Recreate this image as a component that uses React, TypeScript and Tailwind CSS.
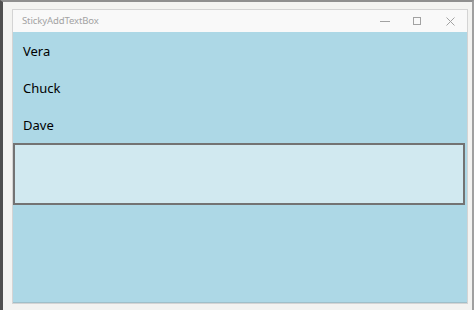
const names = ['Vera', 'Chuck', 'Dave'];

export default function App() {
  return (
    <div className="w-[474px] h-[310px] overflow-hidden bg-[#f3f3f1] border-t-2 border-t-[#8f8f8f] border-l-[3px] border-l-[#4f4f4f] border-r-2 border-r-[#a0a0a0] pl-[9px] pt-[7px] font-['Noto_Sans',sans-serif]">
      <div className="w-[456px] h-[295px] flex flex-col border border-[#d4d4d4] bg-white">
        {/* title bar */}
        <div className="h-[22px] flex items-center bg-[#f9f9f9] pl-[9px]">
          <span className="text-[9.5px] text-[#a3a3a3] tracking-[-0.1px]">StickyAddTextBox</span>
          <div className="ml-auto flex items-center h-full">
            <div className="w-[32px] h-full flex items-center justify-center">
              <div className="w-[10px] h-px bg-[#a2a2a2]" />
            </div>
            <div className="w-[32px] h-full flex items-center justify-center">
              <div className="w-[8px] h-[8px] border border-[#a2a2a2]" />
            </div>
            <div className="w-[34px] h-full flex items-center justify-center">
              <svg width="9" height="9" viewBox="0 0 9 9" fill="none" stroke="#a2a2a2" strokeWidth="1">
                <path d="M0.5 0.5 L8.5 8.5 M8.5 0.5 L0.5 8.5" />
              </svg>
            </div>
          </div>
        </div>
        {/* content */}
        <div className="flex-1 flex flex-col bg-[#add8e6] border-b border-b-[#9fbfc9]">
          {names.map((n) => (
            <div key={n} className="h-[37px] flex items-center pl-[10px] pt-[2px] text-[13px] text-black">
              {n}
            </div>
          ))}
          <div className="h-[62px] mr-[2px] border-2 border-[#737373] bg-[#d1e9f0]" />
        </div>
      </div>
    </div>
  );
}
